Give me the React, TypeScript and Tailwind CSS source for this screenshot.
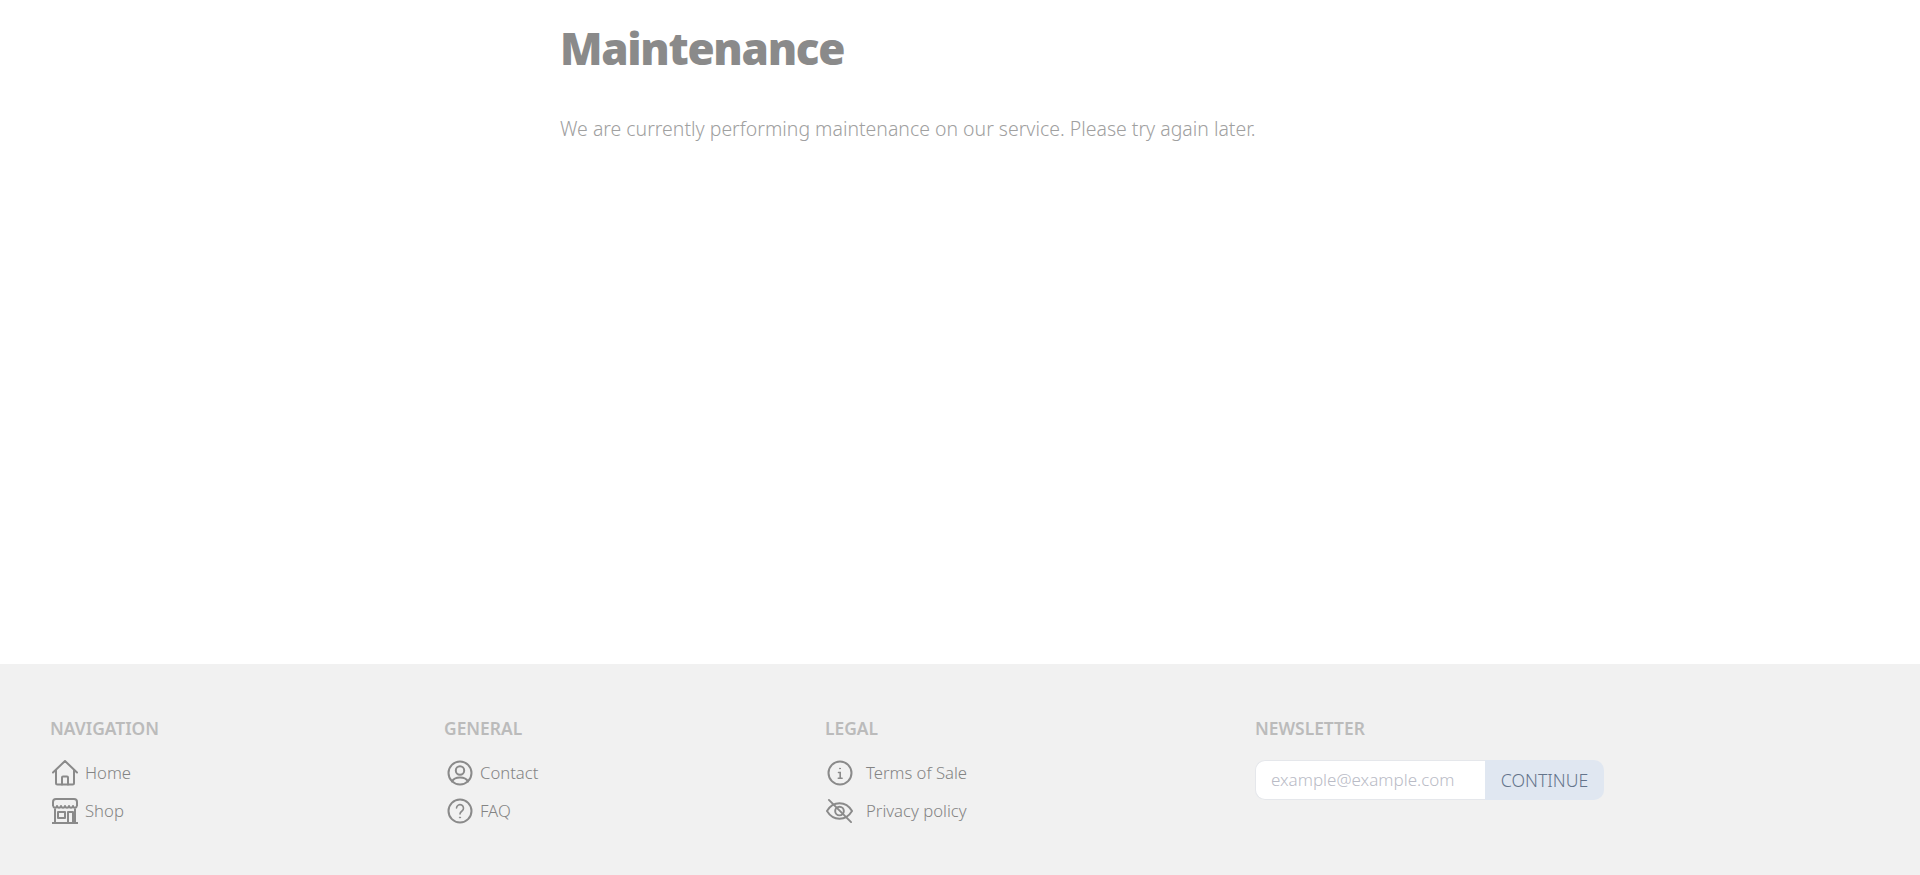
import React from 'react';

const HomeIcon = () => (
  <svg viewBox="0 0 26 26" className="w-[26px] h-[26px]" fill="none" stroke="#8a8a8a" strokeWidth="2" strokeLinecap="round" strokeLinejoin="round">
    <path d="M1 12.500 13 1l12 11.500" />
    <path d="M4 10.500V23a1.500 1.500 0 0 0 1.500 1.500h15A1.500 1.500 0 0 0 22 23V10.500" />
    <path d="M10 24.500V17.500a1 1 0 0 1 1-1h4a1 1 0 0 1 1 1v7" />
  </svg>
);

const ShopIcon = () => (
  <svg viewBox="0 0 26 26" className="w-[26px] h-[26px]" fill="none" stroke="#8a8a8a" strokeWidth="2" strokeLinejoin="round">
    <path d="M1 8V4a3 3 0 0 1 3-3h18a3 3 0 0 1 3 3v4" />
    <path d="M1 8c1 2.400 3.500 2.400 4 0 .6 2.400 3.400 2.400 4 0 .6 2.400 3.400 2.400 4 0 .6 2.400 3.400 2.400 4 0 .6 2.400 3.400 2.400 4 0 .5 2.400 3 2.400 4 0" />
    <path d="M3 10.500V25M23 10.500V25M0 25h26" />
    <path d="M6 14h7v6H6zM16 25V14h5v11" />
  </svg>
);

const UserIcon = () => (
  <svg viewBox="0 0 26 26" className="w-[26px] h-[26px]" fill="none" stroke="#8a8a8a" strokeWidth="2" strokeLinecap="round">
    <circle cx="13" cy="13" r="11.500" />
    <circle cx="13" cy="10.500" r="4.200" />
    <path d="M5 21.500c1.500-3 4.500-4 8-4s6.500 1 8 4" />
  </svg>
);

const HelpIcon = () => (
  <svg viewBox="0 0 26 26" className="w-[26px] h-[26px]" fill="none" stroke="#8a8a8a" strokeWidth="2" strokeLinecap="round">
    <circle cx="13" cy="13" r="11.500" />
    <path d="M9.500 10a3.500 3.500 0 1 1 5.500 3c-1.300.9-2 1.600-2 3" strokeWidth="1.600" />
    <circle cx="13" cy="19.500" r=".6" fill="#8a8a8a" strokeWidth="1" />
  </svg>
);

const InfoIcon = () => (
  <svg viewBox="0 0 26 26" className="w-[26px] h-[26px]" fill="none" stroke="#8a8a8a" strokeWidth="2" strokeLinecap="round">
    <circle cx="13" cy="13" r="11.500" />
    <path d="M11.500 12.500H13.200V18M11.300 18.200h3.800" strokeWidth="1.600" />
    <circle cx="13" cy="8.500" r=".5" fill="#8a8a8a" strokeWidth="1" />
  </svg>
);

const EyeOffIcon = () => (
  <svg viewBox="0 0 28 26" className="w-[27px] h-[26px] -ml-[1px]" fill="none" stroke="#8a8a8a" strokeWidth="2" strokeLinecap="round">
    <path d="M1 13c3-5 7.500-8 13-8s10 3 13 8c-3 5-7.500 8-13 8S4 18 1 13Z" />
    <circle cx="14" cy="13" r="4.500" />
    <path d="M3 1.500 26 24.500" />
  </svg>
);

const navColumns = [
  {
    title: 'NAVIGATION',
    width: 'w-[394px]',
    row: 'gap-[7px] pl-[2px]',
    links: [
      { name: 'Home', icon: <HomeIcon /> },
      { name: 'Shop', icon: <ShopIcon /> },
    ],
  },
  {
    title: 'GENERAL',
    width: 'w-[381px]',
    row: 'gap-[7px] pl-[3px]',
    links: [
      { name: 'Contact', icon: <UserIcon /> },
      { name: 'FAQ', icon: <HelpIcon /> },
    ],
  },
  {
    title: 'LEGAL',
    width: 'w-[430px]',
    row: 'gap-[13px] pl-[2px]',
    links: [
      { name: 'Terms of Sale', icon: <InfoIcon /> },
      { name: 'Privacy policy', icon: <EyeOffIcon /> },
    ],
  },
];

export default function App() {
  return (
    <div className="min-h-[875px] flex flex-col bg-white font-['Noto_Sans',sans-serif]">
      <main className="flex-1 w-[800px] mx-auto">
        <h1 className="mt-[18px] text-[44px] leading-[60px] font-black tracking-[-1.300px] text-[#8a8a8a]">Maintenance</h1>
        <p className="mt-[36px] text-[19.450px] leading-[30px] font-light text-[#a0a0a0]">
          We are currently performing maintenance on our service. Please try again later.
        </p>
      </main>

      <footer className="h-[211px] bg-[#f1f1f1] pl-[50px] pt-[51px] flex">
        {navColumns.map((col) => (
          <div key={col.title} className={col.width}>
            <h3 className="text-[17.400px] leading-[26px] font-semibold text-[#bbbbbb]">{col.title}</h3>
            <ul className="mt-[19px] flex flex-col gap-[12px]">
              {col.links.map((link) => (
                <li key={link.name} className={`flex items-center h-[26px] ${col.row}`}>
                  {link.icon}
                  <span className="text-[16.700px] leading-[26px] font-light text-[#848484]">{link.name}</span>
                </li>
              ))}
            </ul>
          </div>
        ))}
        <div>
          <h3 className="text-[17.400px] leading-[26px] font-semibold text-[#bbbbbb]">NEWSLETTER</h3>
          <div className="mt-[19px] flex h-[40px] w-[349px]">
            <input
              placeholder="example@example.com"
              className="w-[230px] rounded-l-[10px] border border-r-0 border-[#e5e7eb] bg-white pl-[15px] text-[17px] font-light outline-none placeholder:text-[#b9bbc6]"
            />
            <button className="flex-1 rounded-r-[10px] bg-[#e0e7f1] text-[17.700px] font-light text-[#64748b]">CONTINUE</button>
          </div>
        </div>
      </footer>
    </div>
  );
}
